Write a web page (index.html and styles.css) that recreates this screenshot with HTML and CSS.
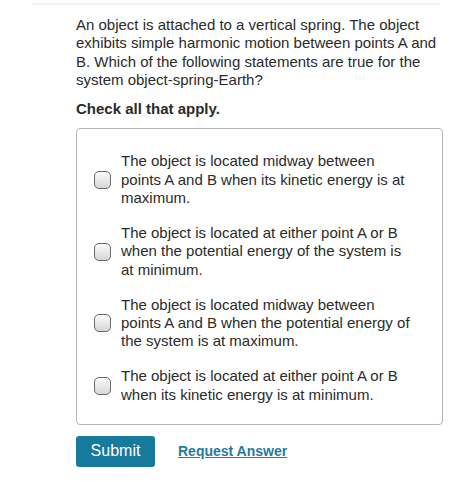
FILE: index.html
```html
<!DOCTYPE html>
<html>
<head>
<meta charset="utf-8">
<link rel="stylesheet" href="styles.css">
</head>
<body>
<div class="top-rule"></div>
<main class="content">
  <p class="question">An object is attached to a vertical spring. The object exhibits simple harmonic motion between points A and B. Which of the following statements are true for the system object-spring-Earth?</p>
  <p class="instruction">Check all that apply.</p>
  <div class="options">
    <label class="option"><span class="box"></span><span class="text">The object is located midway between points A and B when its kinetic energy is at maximum.</span></label>
    <label class="option"><span class="box"></span><span class="text">The object is located at either point A or B when the potential energy of the system is at minimum.</span></label>
    <label class="option"><span class="box"></span><span class="text">The object is located midway between points A and B when the potential energy of the system is at maximum.</span></label>
    <label class="option"><span class="box"></span><span class="text">The object is located at either point A or B when its kinetic energy is at minimum.</span></label>
  </div>
  <div class="actions">
    <button class="submit">Submit</button>
    <a class="request" href="#">Request Answer</a>
  </div>
</main>
</body>
</html>
```

FILE: styles.css
```css
html, body {
  margin: 0;
  padding: 0;
  background: #ffffff;
}
body {
  font-family: "Liberation Sans", Arial, Helvetica, sans-serif;
  color: #2b2b2b;
  font-size: 15px;
  line-height: 18.3px;
}
.top-rule {
  margin: 3px 34px 0 32px;
  height: 2px;
  background: #f4f4f4;
}
.content {
  margin-left: 76px;
  width: 367px;
}
.question {
  margin: 11px 0 0 0;
}
.instruction {
  margin: 11px 0 0 0;
  font-weight: bold;
}
.options {
  margin-top: 10px;
  border: 1px solid #b5b5b5;
  border-radius: 4px;
  padding: 23px 30px 20px 17px;
  display: flex;
  flex-direction: column;
  gap: 16.7px;
}
.option {
  display: flex;
  align-items: center;
  gap: 10px;
}
.box {
  flex: none;
  width: 15px;
  height: 16px;
  border: 1.5px solid #6a6a6a;
  border-radius: 5px;
  background: linear-gradient(#fbfbfb, #d6d6d6);
}
.text {
  flex: 1;
}
.actions {
  margin-top: 11px;
  display: flex;
  align-items: center;
  gap: 23px;
}
.submit {
  font-family: inherit;
  font-size: 16px;
  color: #ffffff;
  background: #17799b;
  border: none;
  border-radius: 3px;
  width: 79px;
  height: 31px;
  padding: 0;
}
.request {
  font-weight: bold;
  color: #1f7ca0;
  font-size: 14px;
  text-decoration: underline;
}
```
